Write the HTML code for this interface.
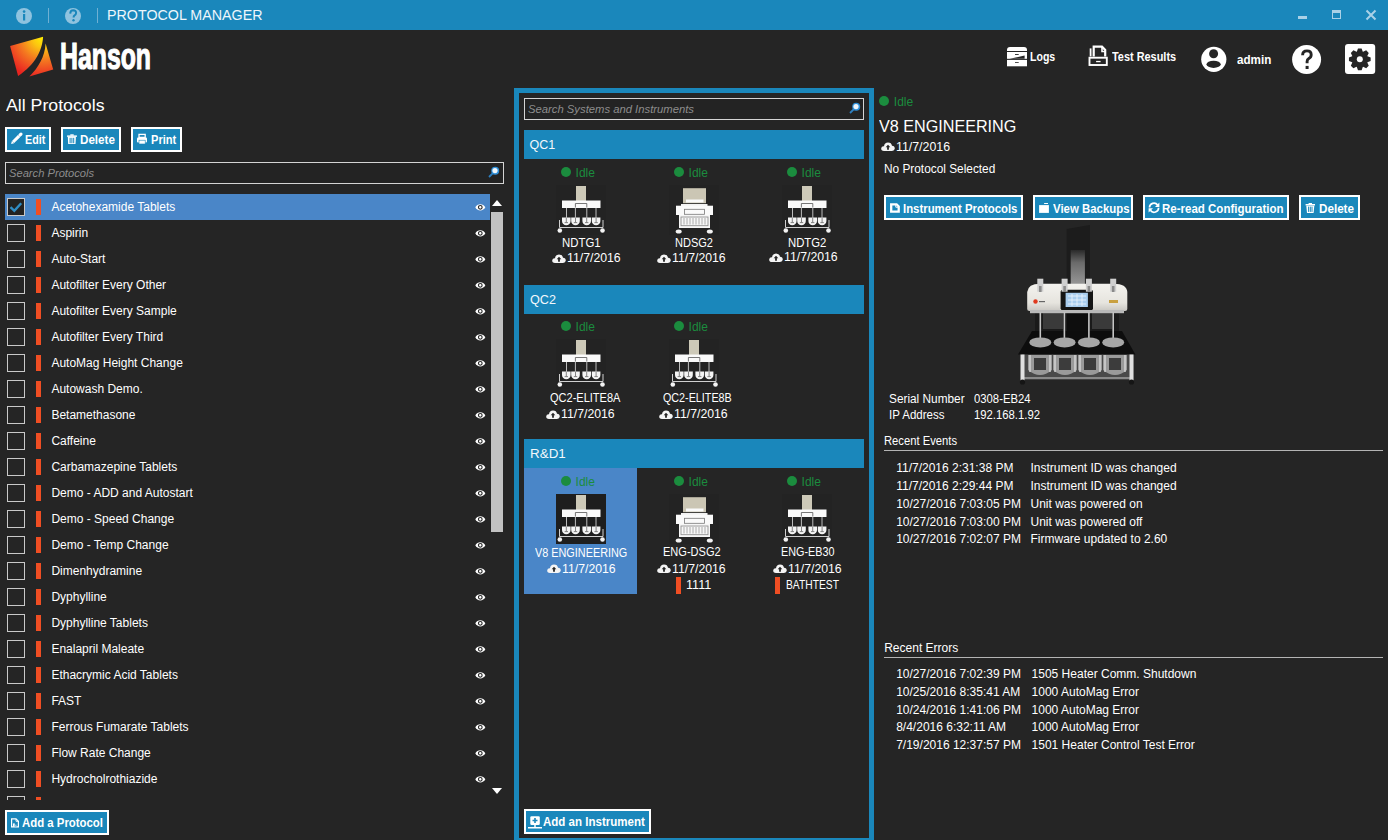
<!DOCTYPE html>
<html><head><meta charset="utf-8"><style>
html,body{margin:0;padding:0;}
body{width:1388px;height:840px;background:#252525;position:relative;overflow:hidden;font-family:"Liberation Sans",sans-serif;}
.t{position:absolute;white-space:pre;}
svg{overflow:visible}
</style></head><body>
<div style="position:absolute;left:0;top:0;width:1388px;height:30px;background:#1a87bb"></div><svg style="position:absolute;left:0;top:0" width="1388" height="30">
<circle cx="24" cy="16" r="8" fill="#8fc3df"/>
<rect x="23" y="14" width="2.2" height="6.5" fill="#1a87bb"/><circle cx="24.1" cy="11.6" r="1.3" fill="#1a87bb"/>
<line x1="48.5" y1="8" x2="48.5" y2="23" stroke="#6fb0d3" stroke-width="1"/>
<circle cx="73" cy="16" r="8" fill="#8fc3df"/>
<path d="M70.2 13.6 Q70.4 10.2 73.2 10.2 Q76.2 10.3 76.1 13 Q76 14.6 74.3 15.6 Q73.6 16.1 73.6 17.6" fill="none" stroke="#1a87bb" stroke-width="2"/>
<circle cx="73.5" cy="20.3" r="1.2" fill="#1a87bb"/>
<line x1="97.5" y1="8" x2="97.5" y2="23" stroke="#6fb0d3" stroke-width="1"/>
<rect x="1298" y="16" width="9" height="3" fill="#a9d1e7"/>
<rect x="1332.5" y="10.5" width="8" height="8" fill="none" stroke="#a9d1e7" stroke-width="1"/>
<rect x="1332" y="10" width="9" height="3" fill="#a9d1e7"/>
<path d="M1366.5 10.5 L1375.5 19.5 M1375.5 10.5 L1366.5 19.5" stroke="#a9d1e7" stroke-width="2"/>
</svg><svg style="position:absolute;left:0;top:0" width="160" height="90">
<defs><radialGradient id="lg" cx="43" cy="37" r="42" gradientUnits="userSpaceOnUse">
<stop offset="0" stop-color="#fff200"/><stop offset="0.25" stop-color="#fcc511"/><stop offset="0.55" stop-color="#f47a20"/><stop offset="0.85" stop-color="#ee3d23"/><stop offset="1" stop-color="#e8231f"/></radialGradient></defs>
<path d="M10.1 46 L43.1 36.8 C42.2 50 36 64 18.1 76 Z" fill="url(#lg)"/>
<path d="M45.6 43.6 L53.2 69.5 L29.4 76.6 C38.5 67.5 44.8 57 45.6 43.6 Z" fill="url(#lg)"/>
</svg><div style="position:absolute;left:5px;top:127px;width:42px;height:21px;border:2px solid #fff;background:#1a87bb"></div><svg style="position:absolute;left:0;top:120" width="60" height="40"><path d="M11.1 24 L11.9 20.9 L14.2 23.2 Z" fill="#fff"/><line x1="13.1" y1="22" x2="19" y2="16.1" stroke="#fff" stroke-width="3.1"/><line x1="19.9" y1="15.2" x2="21" y2="14.1" stroke="#fff" stroke-width="3.1" stroke-linecap="round"/></svg><div style="position:absolute;left:61px;top:127px;width:56px;height:21px;border:2px solid #fff;background:#1a87bb"></div><svg style="position:absolute;left:0;top:120px" width="200" height="40">
<rect x="67.1" y="15.4" width="9.8" height="1.5" fill="#fff"/><rect x="70.3" y="14.3" width="3.4" height="1.4" fill="#fff"/>
<path d="M67.8 17 H75.9 L75.5 24 H68.2 Z" fill="#fff"/>
<rect x="69.6" y="17.8" width="1" height="5.4" fill="#1a87bb"/><rect x="71.4" y="17.8" width="1" height="5.4" fill="#1a87bb"/><rect x="73.2" y="17.8" width="1" height="5.4" fill="#1a87bb"/>
</svg><div style="position:absolute;left:131px;top:127px;width:47px;height:21px;border:2px solid #fff;background:#1a87bb"></div><svg style="position:absolute;left:0;top:120px" width="200" height="40">
<rect x="139" y="14.4" width="6.2" height="3" fill="none" stroke="#fff" stroke-width="1.3"/>
<rect x="137" y="17.4" width="10" height="5" rx="1" fill="#fff"/>
<rect x="139" y="20.2" width="6.2" height="3.8" fill="#fff" stroke="#1a87bb" stroke-width="0.6"/>
</svg><div style="position:absolute;left:5px;top:162px;width:497px;height:20px;border:1px solid #d4d4d4;background:#232323"></div><svg style="position:absolute;left:484px;top:161.5px" width="20" height="20">
<line x1="5" y1="15" x2="9" y2="11" stroke="#2d7fc0" stroke-width="1.8"/>
<circle cx="11.2" cy="8.8" r="4" fill="#2e8fd8"/><circle cx="11" cy="8.6" r="2.6" fill="#f0f6fb"/></svg><div style="position:absolute;left:0;top:194px;width:510px;height:606px;overflow:hidden"><div style="position:absolute;left:5px;top:0;width:485px;height:26px;background:#4a86c8"></div><div style="position:absolute;left:7px;top:4px;width:16px;height:16px;border:1px solid #c9c9c9;background:#222"></div><svg style="position:absolute;left:7px;top:4px" width="18" height="18"><path d="M3.5 9.2 L7.3 12.8 L14.2 5.2" fill="none" stroke="#2f8cc4" stroke-width="2.4"/></svg><div style="position:absolute;left:36px;top:5px;width:5px;height:16px;background:#f04e23"></div><svg style="position:absolute;left:475.2px;top:9.5px" width="11" height="7" viewBox="0 0 11 7"><path d="M0.3 3.3 C2.2 -0.9 8.4 -0.9 10.3 3.3 C8.4 7.5 2.2 7.5 0.3 3.3 Z" fill="#fff"/><circle cx="5.3" cy="3.3" r="1.8" fill="none" stroke="#2a2a2a" stroke-width="1.2"/><circle cx="5.3" cy="3.3" r="0.9" fill="#fff"/></svg><div style="position:absolute;left:7px;top:30px;width:16px;height:16px;border:1px solid #c9c9c9;background:transparent"></div><div style="position:absolute;left:36px;top:31px;width:5px;height:16px;background:#f04e23"></div><svg style="position:absolute;left:475.2px;top:35.5px" width="11" height="7" viewBox="0 0 11 7"><path d="M0.3 3.3 C2.2 -0.9 8.4 -0.9 10.3 3.3 C8.4 7.5 2.2 7.5 0.3 3.3 Z" fill="#fff"/><circle cx="5.3" cy="3.3" r="1.8" fill="none" stroke="#2a2a2a" stroke-width="1.2"/><circle cx="5.3" cy="3.3" r="0.9" fill="#fff"/></svg><div style="position:absolute;left:7px;top:56px;width:16px;height:16px;border:1px solid #c9c9c9;background:transparent"></div><div style="position:absolute;left:36px;top:57px;width:5px;height:16px;background:#f04e23"></div><svg style="position:absolute;left:475.2px;top:61.5px" width="11" height="7" viewBox="0 0 11 7"><path d="M0.3 3.3 C2.2 -0.9 8.4 -0.9 10.3 3.3 C8.4 7.5 2.2 7.5 0.3 3.3 Z" fill="#fff"/><circle cx="5.3" cy="3.3" r="1.8" fill="none" stroke="#2a2a2a" stroke-width="1.2"/><circle cx="5.3" cy="3.3" r="0.9" fill="#fff"/></svg><div style="position:absolute;left:7px;top:82px;width:16px;height:16px;border:1px solid #c9c9c9;background:transparent"></div><div style="position:absolute;left:36px;top:83px;width:5px;height:16px;background:#f04e23"></div><svg style="position:absolute;left:475.2px;top:87.5px" width="11" height="7" viewBox="0 0 11 7"><path d="M0.3 3.3 C2.2 -0.9 8.4 -0.9 10.3 3.3 C8.4 7.5 2.2 7.5 0.3 3.3 Z" fill="#fff"/><circle cx="5.3" cy="3.3" r="1.8" fill="none" stroke="#2a2a2a" stroke-width="1.2"/><circle cx="5.3" cy="3.3" r="0.9" fill="#fff"/></svg><div style="position:absolute;left:7px;top:108px;width:16px;height:16px;border:1px solid #c9c9c9;background:transparent"></div><div style="position:absolute;left:36px;top:109px;width:5px;height:16px;background:#f04e23"></div><svg style="position:absolute;left:475.2px;top:113.5px" width="11" height="7" viewBox="0 0 11 7"><path d="M0.3 3.3 C2.2 -0.9 8.4 -0.9 10.3 3.3 C8.4 7.5 2.2 7.5 0.3 3.3 Z" fill="#fff"/><circle cx="5.3" cy="3.3" r="1.8" fill="none" stroke="#2a2a2a" stroke-width="1.2"/><circle cx="5.3" cy="3.3" r="0.9" fill="#fff"/></svg><div style="position:absolute;left:7px;top:134px;width:16px;height:16px;border:1px solid #c9c9c9;background:transparent"></div><div style="position:absolute;left:36px;top:135px;width:5px;height:16px;background:#f04e23"></div><svg style="position:absolute;left:475.2px;top:139.5px" width="11" height="7" viewBox="0 0 11 7"><path d="M0.3 3.3 C2.2 -0.9 8.4 -0.9 10.3 3.3 C8.4 7.5 2.2 7.5 0.3 3.3 Z" fill="#fff"/><circle cx="5.3" cy="3.3" r="1.8" fill="none" stroke="#2a2a2a" stroke-width="1.2"/><circle cx="5.3" cy="3.3" r="0.9" fill="#fff"/></svg><div style="position:absolute;left:7px;top:160px;width:16px;height:16px;border:1px solid #c9c9c9;background:transparent"></div><div style="position:absolute;left:36px;top:161px;width:5px;height:16px;background:#f04e23"></div><svg style="position:absolute;left:475.2px;top:165.5px" width="11" height="7" viewBox="0 0 11 7"><path d="M0.3 3.3 C2.2 -0.9 8.4 -0.9 10.3 3.3 C8.4 7.5 2.2 7.5 0.3 3.3 Z" fill="#fff"/><circle cx="5.3" cy="3.3" r="1.8" fill="none" stroke="#2a2a2a" stroke-width="1.2"/><circle cx="5.3" cy="3.3" r="0.9" fill="#fff"/></svg><div style="position:absolute;left:7px;top:186px;width:16px;height:16px;border:1px solid #c9c9c9;background:transparent"></div><div style="position:absolute;left:36px;top:187px;width:5px;height:16px;background:#f04e23"></div><svg style="position:absolute;left:475.2px;top:191.5px" width="11" height="7" viewBox="0 0 11 7"><path d="M0.3 3.3 C2.2 -0.9 8.4 -0.9 10.3 3.3 C8.4 7.5 2.2 7.5 0.3 3.3 Z" fill="#fff"/><circle cx="5.3" cy="3.3" r="1.8" fill="none" stroke="#2a2a2a" stroke-width="1.2"/><circle cx="5.3" cy="3.3" r="0.9" fill="#fff"/></svg><div style="position:absolute;left:7px;top:212px;width:16px;height:16px;border:1px solid #c9c9c9;background:transparent"></div><div style="position:absolute;left:36px;top:213px;width:5px;height:16px;background:#f04e23"></div><svg style="position:absolute;left:475.2px;top:217.5px" width="11" height="7" viewBox="0 0 11 7"><path d="M0.3 3.3 C2.2 -0.9 8.4 -0.9 10.3 3.3 C8.4 7.5 2.2 7.5 0.3 3.3 Z" fill="#fff"/><circle cx="5.3" cy="3.3" r="1.8" fill="none" stroke="#2a2a2a" stroke-width="1.2"/><circle cx="5.3" cy="3.3" r="0.9" fill="#fff"/></svg><div style="position:absolute;left:7px;top:238px;width:16px;height:16px;border:1px solid #c9c9c9;background:transparent"></div><div style="position:absolute;left:36px;top:239px;width:5px;height:16px;background:#f04e23"></div><svg style="position:absolute;left:475.2px;top:243.5px" width="11" height="7" viewBox="0 0 11 7"><path d="M0.3 3.3 C2.2 -0.9 8.4 -0.9 10.3 3.3 C8.4 7.5 2.2 7.5 0.3 3.3 Z" fill="#fff"/><circle cx="5.3" cy="3.3" r="1.8" fill="none" stroke="#2a2a2a" stroke-width="1.2"/><circle cx="5.3" cy="3.3" r="0.9" fill="#fff"/></svg><div style="position:absolute;left:7px;top:264px;width:16px;height:16px;border:1px solid #c9c9c9;background:transparent"></div><div style="position:absolute;left:36px;top:265px;width:5px;height:16px;background:#f04e23"></div><svg style="position:absolute;left:475.2px;top:269.5px" width="11" height="7" viewBox="0 0 11 7"><path d="M0.3 3.3 C2.2 -0.9 8.4 -0.9 10.3 3.3 C8.4 7.5 2.2 7.5 0.3 3.3 Z" fill="#fff"/><circle cx="5.3" cy="3.3" r="1.8" fill="none" stroke="#2a2a2a" stroke-width="1.2"/><circle cx="5.3" cy="3.3" r="0.9" fill="#fff"/></svg><div style="position:absolute;left:7px;top:290px;width:16px;height:16px;border:1px solid #c9c9c9;background:transparent"></div><div style="position:absolute;left:36px;top:291px;width:5px;height:16px;background:#f04e23"></div><svg style="position:absolute;left:475.2px;top:295.5px" width="11" height="7" viewBox="0 0 11 7"><path d="M0.3 3.3 C2.2 -0.9 8.4 -0.9 10.3 3.3 C8.4 7.5 2.2 7.5 0.3 3.3 Z" fill="#fff"/><circle cx="5.3" cy="3.3" r="1.8" fill="none" stroke="#2a2a2a" stroke-width="1.2"/><circle cx="5.3" cy="3.3" r="0.9" fill="#fff"/></svg><div style="position:absolute;left:7px;top:316px;width:16px;height:16px;border:1px solid #c9c9c9;background:transparent"></div><div style="position:absolute;left:36px;top:317px;width:5px;height:16px;background:#f04e23"></div><svg style="position:absolute;left:475.2px;top:321.5px" width="11" height="7" viewBox="0 0 11 7"><path d="M0.3 3.3 C2.2 -0.9 8.4 -0.9 10.3 3.3 C8.4 7.5 2.2 7.5 0.3 3.3 Z" fill="#fff"/><circle cx="5.3" cy="3.3" r="1.8" fill="none" stroke="#2a2a2a" stroke-width="1.2"/><circle cx="5.3" cy="3.3" r="0.9" fill="#fff"/></svg><div style="position:absolute;left:7px;top:342px;width:16px;height:16px;border:1px solid #c9c9c9;background:transparent"></div><div style="position:absolute;left:36px;top:343px;width:5px;height:16px;background:#f04e23"></div><svg style="position:absolute;left:475.2px;top:347.5px" width="11" height="7" viewBox="0 0 11 7"><path d="M0.3 3.3 C2.2 -0.9 8.4 -0.9 10.3 3.3 C8.4 7.5 2.2 7.5 0.3 3.3 Z" fill="#fff"/><circle cx="5.3" cy="3.3" r="1.8" fill="none" stroke="#2a2a2a" stroke-width="1.2"/><circle cx="5.3" cy="3.3" r="0.9" fill="#fff"/></svg><div style="position:absolute;left:7px;top:368px;width:16px;height:16px;border:1px solid #c9c9c9;background:transparent"></div><div style="position:absolute;left:36px;top:369px;width:5px;height:16px;background:#f04e23"></div><svg style="position:absolute;left:475.2px;top:373.5px" width="11" height="7" viewBox="0 0 11 7"><path d="M0.3 3.3 C2.2 -0.9 8.4 -0.9 10.3 3.3 C8.4 7.5 2.2 7.5 0.3 3.3 Z" fill="#fff"/><circle cx="5.3" cy="3.3" r="1.8" fill="none" stroke="#2a2a2a" stroke-width="1.2"/><circle cx="5.3" cy="3.3" r="0.9" fill="#fff"/></svg><div style="position:absolute;left:7px;top:394px;width:16px;height:16px;border:1px solid #c9c9c9;background:transparent"></div><div style="position:absolute;left:36px;top:395px;width:5px;height:16px;background:#f04e23"></div><svg style="position:absolute;left:475.2px;top:399.5px" width="11" height="7" viewBox="0 0 11 7"><path d="M0.3 3.3 C2.2 -0.9 8.4 -0.9 10.3 3.3 C8.4 7.5 2.2 7.5 0.3 3.3 Z" fill="#fff"/><circle cx="5.3" cy="3.3" r="1.8" fill="none" stroke="#2a2a2a" stroke-width="1.2"/><circle cx="5.3" cy="3.3" r="0.9" fill="#fff"/></svg><div style="position:absolute;left:7px;top:420px;width:16px;height:16px;border:1px solid #c9c9c9;background:transparent"></div><div style="position:absolute;left:36px;top:421px;width:5px;height:16px;background:#f04e23"></div><svg style="position:absolute;left:475.2px;top:425.5px" width="11" height="7" viewBox="0 0 11 7"><path d="M0.3 3.3 C2.2 -0.9 8.4 -0.9 10.3 3.3 C8.4 7.5 2.2 7.5 0.3 3.3 Z" fill="#fff"/><circle cx="5.3" cy="3.3" r="1.8" fill="none" stroke="#2a2a2a" stroke-width="1.2"/><circle cx="5.3" cy="3.3" r="0.9" fill="#fff"/></svg><div style="position:absolute;left:7px;top:446px;width:16px;height:16px;border:1px solid #c9c9c9;background:transparent"></div><div style="position:absolute;left:36px;top:447px;width:5px;height:16px;background:#f04e23"></div><svg style="position:absolute;left:475.2px;top:451.5px" width="11" height="7" viewBox="0 0 11 7"><path d="M0.3 3.3 C2.2 -0.9 8.4 -0.9 10.3 3.3 C8.4 7.5 2.2 7.5 0.3 3.3 Z" fill="#fff"/><circle cx="5.3" cy="3.3" r="1.8" fill="none" stroke="#2a2a2a" stroke-width="1.2"/><circle cx="5.3" cy="3.3" r="0.9" fill="#fff"/></svg><div style="position:absolute;left:7px;top:472px;width:16px;height:16px;border:1px solid #c9c9c9;background:transparent"></div><div style="position:absolute;left:36px;top:473px;width:5px;height:16px;background:#f04e23"></div><svg style="position:absolute;left:475.2px;top:477.5px" width="11" height="7" viewBox="0 0 11 7"><path d="M0.3 3.3 C2.2 -0.9 8.4 -0.9 10.3 3.3 C8.4 7.5 2.2 7.5 0.3 3.3 Z" fill="#fff"/><circle cx="5.3" cy="3.3" r="1.8" fill="none" stroke="#2a2a2a" stroke-width="1.2"/><circle cx="5.3" cy="3.3" r="0.9" fill="#fff"/></svg><div style="position:absolute;left:7px;top:498px;width:16px;height:16px;border:1px solid #c9c9c9;background:transparent"></div><div style="position:absolute;left:36px;top:499px;width:5px;height:16px;background:#f04e23"></div><svg style="position:absolute;left:475.2px;top:503.5px" width="11" height="7" viewBox="0 0 11 7"><path d="M0.3 3.3 C2.2 -0.9 8.4 -0.9 10.3 3.3 C8.4 7.5 2.2 7.5 0.3 3.3 Z" fill="#fff"/><circle cx="5.3" cy="3.3" r="1.8" fill="none" stroke="#2a2a2a" stroke-width="1.2"/><circle cx="5.3" cy="3.3" r="0.9" fill="#fff"/></svg><div style="position:absolute;left:7px;top:524px;width:16px;height:16px;border:1px solid #c9c9c9;background:transparent"></div><div style="position:absolute;left:36px;top:525px;width:5px;height:16px;background:#f04e23"></div><svg style="position:absolute;left:475.2px;top:529.5px" width="11" height="7" viewBox="0 0 11 7"><path d="M0.3 3.3 C2.2 -0.9 8.4 -0.9 10.3 3.3 C8.4 7.5 2.2 7.5 0.3 3.3 Z" fill="#fff"/><circle cx="5.3" cy="3.3" r="1.8" fill="none" stroke="#2a2a2a" stroke-width="1.2"/><circle cx="5.3" cy="3.3" r="0.9" fill="#fff"/></svg><div style="position:absolute;left:7px;top:550px;width:16px;height:16px;border:1px solid #c9c9c9;background:transparent"></div><div style="position:absolute;left:36px;top:551px;width:5px;height:16px;background:#f04e23"></div><svg style="position:absolute;left:475.2px;top:555.5px" width="11" height="7" viewBox="0 0 11 7"><path d="M0.3 3.3 C2.2 -0.9 8.4 -0.9 10.3 3.3 C8.4 7.5 2.2 7.5 0.3 3.3 Z" fill="#fff"/><circle cx="5.3" cy="3.3" r="1.8" fill="none" stroke="#2a2a2a" stroke-width="1.2"/><circle cx="5.3" cy="3.3" r="0.9" fill="#fff"/></svg><div style="position:absolute;left:7px;top:576px;width:16px;height:16px;border:1px solid #c9c9c9;background:transparent"></div><div style="position:absolute;left:36px;top:577px;width:5px;height:16px;background:#f04e23"></div><svg style="position:absolute;left:475.2px;top:581.5px" width="11" height="7" viewBox="0 0 11 7"><path d="M0.3 3.3 C2.2 -0.9 8.4 -0.9 10.3 3.3 C8.4 7.5 2.2 7.5 0.3 3.3 Z" fill="#fff"/><circle cx="5.3" cy="3.3" r="1.8" fill="none" stroke="#2a2a2a" stroke-width="1.2"/><circle cx="5.3" cy="3.3" r="0.9" fill="#fff"/></svg><div style="position:absolute;left:7px;top:602px;width:16px;height:16px;border:1px solid #c9c9c9;background:transparent"></div><div style="position:absolute;left:36px;top:603px;width:5px;height:16px;background:#f04e23"></div></div><svg style="position:absolute;left:488px;top:195px" width="18" height="605">
<path d="M4 11 L9 5 L14 11 Z" fill="#fff"/>
<rect x="3" y="17" width="12" height="320" fill="#c2c2c2"/>
<path d="M4 593 L9 599 L14 593 Z" fill="#fff"/>
</svg><div style="position:absolute;left:5px;top:810px;width:100px;height:21px;border:2px solid #fff;background:#1a87bb"></div><svg style="position:absolute;left:8px;top:815px" width="16" height="16"><path d="M3.6 3.9 H8 L10.4 6.3 V11.9 H3.6 Z" fill="none" stroke="#fff" stroke-width="1.2"/><path d="M8 3.9 V6.3 H10.4" fill="none" stroke="#fff" stroke-width="0.9"/><rect x="5" y="8.4" width="1.8" height="3.4" fill="#fff"/><rect x="6.6" y="9.6" width="2" height="2.2" fill="#8cc4e0"/></svg><div style="position:absolute;left:514px;top:88px;width:350px;height:752px;border:5px solid #1a87bb;border-bottom:none;background:#252525"></div><div style="position:absolute;left:514px;top:838px;width:360px;height:2px;background:#1a87bb"></div><div style="position:absolute;left:524px;top:98px;width:338px;height:20px;border:1px solid #d4d4d4;background:#232323"></div><svg style="position:absolute;left:845px;top:97.5px" width="20" height="20">
<line x1="5" y1="15" x2="9" y2="11" stroke="#2d7fc0" stroke-width="1.8"/>
<circle cx="11.2" cy="8.8" r="4" fill="#2e8fd8"/><circle cx="11" cy="8.6" r="2.6" fill="#f0f6fb"/></svg><div style="position:absolute;left:524px;top:130px;width:340px;height:29px;background:#1a87bb"></div><div style="position:absolute;left:524px;top:285px;width:340px;height:29px;background:#1a87bb"></div><div style="position:absolute;left:524px;top:439px;width:340px;height:29px;background:#1a87bb"></div><div style="position:absolute;left:524px;top:468px;width:113px;height:126px;background:#4a86c8"></div><div style="position:absolute;left:561px;top:167.2px;width:10px;height:10px;border-radius:50%;background:#1b8c3e"></div><div style="position:absolute;left:556px;top:185px;width:50px;height:50px;background:#232323"></div><svg style="position:absolute;left:556px;top:184px" width="50" height="50" viewBox="0 0 50 50">
<rect x="20" y="2" width="10" height="15" fill="#cdc9b8"/>
<rect x="6" y="16.5" width="38.5" height="7.5" fill="#fafafa"/>
<path d="M19.4 23.5 V19.5 H30.8 V23.5" fill="none" stroke="#555" stroke-width="0.8"/>
<path d="M10.5 24 V34 M19.4 24 V34 M30.8 24 V34 M40 24 V34" stroke="#bdbdbd" stroke-width="1"/>
<path d="M6 33.5 H14.6 V37 A4.3 4.3 0 0 1 6 37 Z M15.2 33.5 H23.8 V37 A4.3 4.3 0 0 1 15.2 37 Z M26.4 33.5 H35 V37 A4.3 4.3 0 0 1 26.4 37 Z M35.8 33.5 H44.4 V37 A4.3 4.3 0 0 1 35.8 37 Z" fill="#f4f4f4"/>
<path d="M10.3 33.5 V38.3 M8.6 38.6 H12 M19.5 33.5 V38.3 M17.8 38.6 H21.2 M30.7 33.5 V38.3 M29 38.6 H32.4 M40.1 33.5 V38.3 M38.4 38.6 H41.8" stroke="#666" stroke-width="0.8"/>
<path d="M3.5 36 V43.5 H47 V36" fill="none" stroke="#d0d0d0" stroke-width="1"/>
<circle cx="3.8" cy="46.5" r="2.3" fill="#f4f4f4"/><circle cx="46.5" cy="46.5" r="2.3" fill="#f4f4f4"/>
</svg><svg style="position:absolute;left:552.3px;top:254.09999999999997px" width="14" height="9" viewBox="0 0 14 9">
<path d="M3 9 Q0 9 0.2 6.3 Q0.5 4 3 4.2 Q3.5 0.5 7 0.5 Q10.5 0.6 11 3.8 Q13.8 4.1 13.8 6.6 Q13.6 9 11 9 Z" fill="#f4f4f4"/>
<path d="M7 2.8 L9.3 5.3 H7.9 V7.8 H6.1 V5.3 H4.7 Z" fill="#252525"/></svg><div style="position:absolute;left:674px;top:167.2px;width:10px;height:10px;border-radius:50%;background:#1b8c3e"></div><div style="position:absolute;left:669px;top:185px;width:50px;height:50px;background:#232323"></div><svg style="position:absolute;left:669px;top:184px" width="50" height="50" viewBox="0 0 50 50">
<rect x="14" y="4.2" width="23" height="15" fill="#cbc6b4"/>
<rect x="17" y="15.5" width="17.5" height="3" fill="#fafafa"/>
<rect x="12" y="20" width="26.5" height="3.2" fill="#f2f2f2"/>
<rect x="7" y="21.7" width="37" height="9.3" fill="#fafafa"/>
<rect x="15.4" y="25.3" width="20" height="5" fill="none" stroke="#777" stroke-width="0.8"/>
<rect x="10" y="31" width="31" height="13" fill="#f6f6f6"/>
<rect x="12" y="33" width="27" height="8.7" fill="none" stroke="#888" stroke-width="0.8"/>
<path d="M15 34 V40.5 M18 34 V40.5 M21 34 V40.5 M24 34 V40.5 M27 34 V40.5 M30 34 V40.5 M33 34 V40.5 M36 34 V40.5" stroke="#9a9a9a" stroke-width="0.8"/>
<ellipse cx="9.7" cy="47.4" rx="3" ry="2" fill="#f2f2f2"/><ellipse cx="40.8" cy="47.4" rx="3" ry="2" fill="#f2f2f2"/>
</svg><svg style="position:absolute;left:657.3px;top:254.09999999999997px" width="14" height="9" viewBox="0 0 14 9">
<path d="M3 9 Q0 9 0.2 6.3 Q0.5 4 3 4.2 Q3.5 0.5 7 0.5 Q10.5 0.6 11 3.8 Q13.8 4.1 13.8 6.6 Q13.6 9 11 9 Z" fill="#f4f4f4"/>
<path d="M7 2.8 L9.3 5.3 H7.9 V7.8 H6.1 V5.3 H4.7 Z" fill="#252525"/></svg><div style="position:absolute;left:787px;top:167.2px;width:10px;height:10px;border-radius:50%;background:#1b8c3e"></div><div style="position:absolute;left:782px;top:185px;width:50px;height:50px;background:#232323"></div><svg style="position:absolute;left:782px;top:184px" width="50" height="50" viewBox="0 0 50 50">
<rect x="20" y="2" width="10" height="15" fill="#cdc9b8"/>
<rect x="6" y="16.5" width="38.5" height="7.5" fill="#fafafa"/>
<path d="M19.4 23.5 V19.5 H30.8 V23.5" fill="none" stroke="#555" stroke-width="0.8"/>
<path d="M10.5 24 V34 M19.4 24 V34 M30.8 24 V34 M40 24 V34" stroke="#bdbdbd" stroke-width="1"/>
<path d="M6 33.5 H14.6 V37 A4.3 4.3 0 0 1 6 37 Z M15.2 33.5 H23.8 V37 A4.3 4.3 0 0 1 15.2 37 Z M26.4 33.5 H35 V37 A4.3 4.3 0 0 1 26.4 37 Z M35.8 33.5 H44.4 V37 A4.3 4.3 0 0 1 35.8 37 Z" fill="#f4f4f4"/>
<path d="M10.3 33.5 V38.3 M8.6 38.6 H12 M19.5 33.5 V38.3 M17.8 38.6 H21.2 M30.7 33.5 V38.3 M29 38.6 H32.4 M40.1 33.5 V38.3 M38.4 38.6 H41.8" stroke="#666" stroke-width="0.8"/>
<path d="M3.5 36 V43.5 H47 V36" fill="none" stroke="#d0d0d0" stroke-width="1"/>
<circle cx="3.8" cy="46.5" r="2.3" fill="#f4f4f4"/><circle cx="46.5" cy="46.5" r="2.3" fill="#f4f4f4"/>
</svg><svg style="position:absolute;left:769px;top:253.3px" width="14" height="9" viewBox="0 0 14 9">
<path d="M3 9 Q0 9 0.2 6.3 Q0.5 4 3 4.2 Q3.5 0.5 7 0.5 Q10.5 0.6 11 3.8 Q13.8 4.1 13.8 6.6 Q13.6 9 11 9 Z" fill="#f4f4f4"/>
<path d="M7 2.8 L9.3 5.3 H7.9 V7.8 H6.1 V5.3 H4.7 Z" fill="#252525"/></svg><div style="position:absolute;left:561px;top:321.2px;width:10px;height:10px;border-radius:50%;background:#1b8c3e"></div><div style="position:absolute;left:556px;top:339px;width:50px;height:50px;background:#232323"></div><svg style="position:absolute;left:556px;top:338px" width="50" height="50" viewBox="0 0 50 50">
<rect x="20" y="2" width="10" height="15" fill="#cdc9b8"/>
<rect x="6" y="16.5" width="38.5" height="7.5" fill="#fafafa"/>
<path d="M19.4 23.5 V19.5 H30.8 V23.5" fill="none" stroke="#555" stroke-width="0.8"/>
<path d="M10.5 24 V34 M19.4 24 V34 M30.8 24 V34 M40 24 V34" stroke="#bdbdbd" stroke-width="1"/>
<path d="M6 33.5 H14.6 V37 A4.3 4.3 0 0 1 6 37 Z M15.2 33.5 H23.8 V37 A4.3 4.3 0 0 1 15.2 37 Z M26.4 33.5 H35 V37 A4.3 4.3 0 0 1 26.4 37 Z M35.8 33.5 H44.4 V37 A4.3 4.3 0 0 1 35.8 37 Z" fill="#f4f4f4"/>
<path d="M10.3 33.5 V38.3 M8.6 38.6 H12 M19.5 33.5 V38.3 M17.8 38.6 H21.2 M30.7 33.5 V38.3 M29 38.6 H32.4 M40.1 33.5 V38.3 M38.4 38.6 H41.8" stroke="#666" stroke-width="0.8"/>
<path d="M3.5 36 V43.5 H47 V36" fill="none" stroke="#d0d0d0" stroke-width="1"/>
<circle cx="3.8" cy="46.5" r="2.3" fill="#f4f4f4"/><circle cx="46.5" cy="46.5" r="2.3" fill="#f4f4f4"/>
</svg><svg style="position:absolute;left:546px;top:409.8px" width="14" height="9" viewBox="0 0 14 9">
<path d="M3 9 Q0 9 0.2 6.3 Q0.5 4 3 4.2 Q3.5 0.5 7 0.5 Q10.5 0.6 11 3.8 Q13.8 4.1 13.8 6.6 Q13.6 9 11 9 Z" fill="#f4f4f4"/>
<path d="M7 2.8 L9.3 5.3 H7.9 V7.8 H6.1 V5.3 H4.7 Z" fill="#252525"/></svg><div style="position:absolute;left:674px;top:321.2px;width:10px;height:10px;border-radius:50%;background:#1b8c3e"></div><div style="position:absolute;left:669px;top:339px;width:50px;height:50px;background:#232323"></div><svg style="position:absolute;left:669px;top:338px" width="50" height="50" viewBox="0 0 50 50">
<rect x="20" y="2" width="10" height="15" fill="#cdc9b8"/>
<rect x="6" y="16.5" width="38.5" height="7.5" fill="#fafafa"/>
<path d="M19.4 23.5 V19.5 H30.8 V23.5" fill="none" stroke="#555" stroke-width="0.8"/>
<path d="M10.5 24 V34 M19.4 24 V34 M30.8 24 V34 M40 24 V34" stroke="#bdbdbd" stroke-width="1"/>
<path d="M6 33.5 H14.6 V37 A4.3 4.3 0 0 1 6 37 Z M15.2 33.5 H23.8 V37 A4.3 4.3 0 0 1 15.2 37 Z M26.4 33.5 H35 V37 A4.3 4.3 0 0 1 26.4 37 Z M35.8 33.5 H44.4 V37 A4.3 4.3 0 0 1 35.8 37 Z" fill="#f4f4f4"/>
<path d="M10.3 33.5 V38.3 M8.6 38.6 H12 M19.5 33.5 V38.3 M17.8 38.6 H21.2 M30.7 33.5 V38.3 M29 38.6 H32.4 M40.1 33.5 V38.3 M38.4 38.6 H41.8" stroke="#666" stroke-width="0.8"/>
<path d="M3.5 36 V43.5 H47 V36" fill="none" stroke="#d0d0d0" stroke-width="1"/>
<circle cx="3.8" cy="46.5" r="2.3" fill="#f4f4f4"/><circle cx="46.5" cy="46.5" r="2.3" fill="#f4f4f4"/>
</svg><svg style="position:absolute;left:659px;top:409.8px" width="14" height="9" viewBox="0 0 14 9">
<path d="M3 9 Q0 9 0.2 6.3 Q0.5 4 3 4.2 Q3.5 0.5 7 0.5 Q10.5 0.6 11 3.8 Q13.8 4.1 13.8 6.6 Q13.6 9 11 9 Z" fill="#f4f4f4"/>
<path d="M7 2.8 L9.3 5.3 H7.9 V7.8 H6.1 V5.3 H4.7 Z" fill="#252525"/></svg><div style="position:absolute;left:561px;top:476.2px;width:10px;height:10px;border-radius:50%;background:#1b8c3e"></div><div style="position:absolute;left:556px;top:494px;width:50px;height:50px;background:#1e1e1e"></div><svg style="position:absolute;left:556px;top:493px" width="50" height="50" viewBox="0 0 50 50">
<rect x="20" y="2" width="10" height="15" fill="#cdc9b8"/>
<rect x="6" y="16.5" width="38.5" height="7.5" fill="#fafafa"/>
<path d="M19.4 23.5 V19.5 H30.8 V23.5" fill="none" stroke="#555" stroke-width="0.8"/>
<path d="M10.5 24 V34 M19.4 24 V34 M30.8 24 V34 M40 24 V34" stroke="#bdbdbd" stroke-width="1"/>
<path d="M6 33.5 H14.6 V37 A4.3 4.3 0 0 1 6 37 Z M15.2 33.5 H23.8 V37 A4.3 4.3 0 0 1 15.2 37 Z M26.4 33.5 H35 V37 A4.3 4.3 0 0 1 26.4 37 Z M35.8 33.5 H44.4 V37 A4.3 4.3 0 0 1 35.8 37 Z" fill="#f4f4f4"/>
<path d="M10.3 33.5 V38.3 M8.6 38.6 H12 M19.5 33.5 V38.3 M17.8 38.6 H21.2 M30.7 33.5 V38.3 M29 38.6 H32.4 M40.1 33.5 V38.3 M38.4 38.6 H41.8" stroke="#666" stroke-width="0.8"/>
<path d="M3.5 36 V43.5 H47 V36" fill="none" stroke="#d0d0d0" stroke-width="1"/>
<circle cx="3.8" cy="46.5" r="2.3" fill="#f4f4f4"/><circle cx="46.5" cy="46.5" r="2.3" fill="#f4f4f4"/>
</svg><svg style="position:absolute;left:547.2px;top:564.4000000000001px" width="14" height="9" viewBox="0 0 14 9">
<path d="M3 9 Q0 9 0.2 6.3 Q0.5 4 3 4.2 Q3.5 0.5 7 0.5 Q10.5 0.6 11 3.8 Q13.8 4.1 13.8 6.6 Q13.6 9 11 9 Z" fill="#f4f4f4"/>
<path d="M7 2.8 L9.3 5.3 H7.9 V7.8 H6.1 V5.3 H4.7 Z" fill="#252525"/></svg><div style="position:absolute;left:674px;top:476.2px;width:10px;height:10px;border-radius:50%;background:#1b8c3e"></div><div style="position:absolute;left:669px;top:494px;width:50px;height:50px;background:#232323"></div><svg style="position:absolute;left:669px;top:493px" width="50" height="50" viewBox="0 0 50 50">
<rect x="14" y="4.2" width="23" height="15" fill="#cbc6b4"/>
<rect x="17" y="15.5" width="17.5" height="3" fill="#fafafa"/>
<rect x="12" y="20" width="26.5" height="3.2" fill="#f2f2f2"/>
<rect x="7" y="21.7" width="37" height="9.3" fill="#fafafa"/>
<rect x="15.4" y="25.3" width="20" height="5" fill="none" stroke="#777" stroke-width="0.8"/>
<rect x="10" y="31" width="31" height="13" fill="#f6f6f6"/>
<rect x="12" y="33" width="27" height="8.7" fill="none" stroke="#888" stroke-width="0.8"/>
<path d="M15 34 V40.5 M18 34 V40.5 M21 34 V40.5 M24 34 V40.5 M27 34 V40.5 M30 34 V40.5 M33 34 V40.5 M36 34 V40.5" stroke="#9a9a9a" stroke-width="0.8"/>
<ellipse cx="9.7" cy="47.4" rx="3" ry="2" fill="#f2f2f2"/><ellipse cx="40.8" cy="47.4" rx="3" ry="2" fill="#f2f2f2"/>
</svg><svg style="position:absolute;left:657px;top:564.4000000000001px" width="14" height="9" viewBox="0 0 14 9">
<path d="M3 9 Q0 9 0.2 6.3 Q0.5 4 3 4.2 Q3.5 0.5 7 0.5 Q10.5 0.6 11 3.8 Q13.8 4.1 13.8 6.6 Q13.6 9 11 9 Z" fill="#f4f4f4"/>
<path d="M7 2.8 L9.3 5.3 H7.9 V7.8 H6.1 V5.3 H4.7 Z" fill="#252525"/></svg><div style="position:absolute;left:676px;top:577px;width:5px;height:17px;background:#f04e23"></div><div style="position:absolute;left:787px;top:476.2px;width:10px;height:10px;border-radius:50%;background:#1b8c3e"></div><div style="position:absolute;left:782px;top:494px;width:50px;height:50px;background:#232323"></div><svg style="position:absolute;left:782px;top:493px" width="50" height="50" viewBox="0 0 50 50">
<rect x="20" y="2" width="10" height="15" fill="#cdc9b8"/>
<rect x="6" y="16.5" width="38.5" height="7.5" fill="#fafafa"/>
<path d="M19.4 23.5 V19.5 H30.8 V23.5" fill="none" stroke="#555" stroke-width="0.8"/>
<path d="M10.5 24 V34 M19.4 24 V34 M30.8 24 V34 M40 24 V34" stroke="#bdbdbd" stroke-width="1"/>
<path d="M6 33.5 H14.6 V37 A4.3 4.3 0 0 1 6 37 Z M15.2 33.5 H23.8 V37 A4.3 4.3 0 0 1 15.2 37 Z M26.4 33.5 H35 V37 A4.3 4.3 0 0 1 26.4 37 Z M35.8 33.5 H44.4 V37 A4.3 4.3 0 0 1 35.8 37 Z" fill="#f4f4f4"/>
<path d="M10.3 33.5 V38.3 M8.6 38.6 H12 M19.5 33.5 V38.3 M17.8 38.6 H21.2 M30.7 33.5 V38.3 M29 38.6 H32.4 M40.1 33.5 V38.3 M38.4 38.6 H41.8" stroke="#666" stroke-width="0.8"/>
<path d="M3.5 36 V43.5 H47 V36" fill="none" stroke="#d0d0d0" stroke-width="1"/>
<circle cx="3.8" cy="46.5" r="2.3" fill="#f4f4f4"/><circle cx="46.5" cy="46.5" r="2.3" fill="#f4f4f4"/>
</svg><svg style="position:absolute;left:773px;top:564.4000000000001px" width="14" height="9" viewBox="0 0 14 9">
<path d="M3 9 Q0 9 0.2 6.3 Q0.5 4 3 4.2 Q3.5 0.5 7 0.5 Q10.5 0.6 11 3.8 Q13.8 4.1 13.8 6.6 Q13.6 9 11 9 Z" fill="#f4f4f4"/>
<path d="M7 2.8 L9.3 5.3 H7.9 V7.8 H6.1 V5.3 H4.7 Z" fill="#252525"/></svg><div style="position:absolute;left:775px;top:577px;width:5px;height:17px;background:#f04e23"></div><div style="position:absolute;left:524px;top:809px;width:123px;height:21px;border:2px solid #fff;background:#1a87bb"></div><svg style="position:absolute;left:528px;top:812px" width="16" height="18"><rect x="2.3" y="4.2" width="9.5" height="8.8" rx="1.3" fill="#fff"/><path d="M7 6 V11 M4.5 8.5 H9.5" stroke="#1a87bb" stroke-width="1.6"/><path d="M7 13 V15.5 M0 15.7 H14" stroke="#fff" stroke-width="1.5"/></svg><div style="position:absolute;left:879px;top:96px;width:10px;height:10px;border-radius:50%;background:#1b8c3e"></div><svg style="position:absolute;left:881px;top:142px" width="14" height="9" viewBox="0 0 14 9">
<path d="M3 9 Q0 9 0.2 6.3 Q0.5 4 3 4.2 Q3.5 0.5 7 0.5 Q10.5 0.6 11 3.8 Q13.8 4.1 13.8 6.6 Q13.6 9 11 9 Z" fill="#f4f4f4"/>
<path d="M7 2.8 L9.3 5.3 H7.9 V7.8 H6.1 V5.3 H4.7 Z" fill="#252525"/></svg><div style="position:absolute;left:884px;top:195px;width:135px;height:21px;border:2px solid #fff;background:#1a87bb"></div><div style="position:absolute;left:1033px;top:195px;width:96px;height:21px;border:2px solid #fff;background:#1a87bb"></div><div style="position:absolute;left:1143px;top:195px;width:142px;height:21px;border:2px solid #fff;background:#1a87bb"></div><div style="position:absolute;left:1299px;top:195px;width:57px;height:21px;border:2px solid #fff;background:#1a87bb"></div><svg style="position:absolute;left:0;top:0" width="1388" height="230">
<path d="M891.2 204.3 H896.6 L898.7 206.4 V211.7 H891.2 Z" fill="none" stroke="#fff" stroke-width="2.3"/>
<path d="M895.8 204.5 V207.2 H898.5" fill="none" stroke="#fff" stroke-width="1"/>
<rect x="1039.1" y="205.1" width="9.8" height="7.8" fill="#fff"/><rect x="1044.1" y="203" width="3.9" height="1" fill="#fff"/>
<path d="M1149.5 207.6 A4.5 4.5 0 0 1 1157.6 204.9" fill="none" stroke="#fff" stroke-width="1.7"/>
<path d="M1158.6 207.7 A4.5 4.5 0 0 1 1150.4 210.3" fill="none" stroke="#fff" stroke-width="1.7"/>
<path d="M1159.4 202.6 V207 H1155 Z M1148.6 212.6 V208.2 H1153 Z" fill="#fff"/>
<rect x="1305.6" y="204" width="9.4" height="1.5" fill="#fff"/><rect x="1308.6" y="203" width="3.4" height="1.5" fill="#fff"/>
<path d="M1306.3 205.8 H1314.3 L1313.6 212.9 H1307 Z" fill="#fff"/>
<rect x="1308.1" y="206.6" width="1" height="5.3" fill="#1a87bb"/><rect x="1309.8" y="206.6" width="1" height="5.3" fill="#1a87bb"/><rect x="1311.5" y="206.6" width="1" height="5.3" fill="#1a87bb"/>
</svg><svg style="position:absolute;left:1010px;top:220px" width="140" height="170" viewBox="0 0 140 170">
<defs>
<linearGradient id="head" x1="0" y1="0" x2="0" y2="1"><stop offset="0" stop-color="#f4f3ef"/><stop offset="0.7" stop-color="#e6e4de"/><stop offset="1" stop-color="#c9c7c2"/></linearGradient>
<linearGradient id="colf" x1="0" y1="0" x2="0" y2="1"><stop offset="0" stop-color="#2a2a2a"/><stop offset="0.35" stop-color="#6a6a6a"/><stop offset="1" stop-color="#9a9a9a"/></linearGradient>
<linearGradient id="bath" x1="0" y1="0" x2="0" y2="1"><stop offset="0" stop-color="#4a4a4a"/><stop offset="0.5" stop-color="#7a7a7a"/><stop offset="1" stop-color="#5a5a5a"/></linearGradient>
</defs>
<path d="M56.6 9 L79.9 5 V66 H56.6 Z" fill="#1c1c1c"/>
<rect x="60.7" y="30" width="14.2" height="36" fill="url(#colf)"/>
<rect x="25" y="90" width="84" height="22" fill="#1a1a1a"/>
<rect x="33" y="93" width="20" height="16" fill="#3a3a3a"/><rect x="82" y="93" width="20" height="16" fill="#3a3a3a"/>
<rect x="57" y="93" width="21" height="19" fill="#0e0e0e"/>
<path d="M17.2 72 Q18 63.7 30 63.7 H104 Q116.5 63.7 117.3 72 V89 Q117.3 91 115 91 H19.5 Q17.2 91 17.2 89 Z" fill="url(#head)"/>
<rect x="50.6" y="69.8" width="32.4" height="20.5" rx="2" fill="#151515"/>
<rect x="55.6" y="72.8" width="22.3" height="14.2" fill="#a9cdee"/>
<path d="M58 76 H76 M58 80 H76 M58 84 H76 M62 74 V86 M67 74 V86 M72 74 V86" stroke="#e8f2fb" stroke-width="0.9"/>
<g fill="#cfcfcf"><rect x="27.3" y="58.7" width="6" height="13"/><rect x="51.6" y="58.7" width="6" height="13"/><rect x="75.9" y="58.7" width="6" height="13"/><rect x="100.2" y="58.7" width="6" height="13"/></g>
<g fill="#8a8a8a"><rect x="29" y="66" width="2.6" height="6"/><rect x="53.3" y="66" width="2.6" height="6"/><rect x="77.6" y="66" width="2.6" height="6"/><rect x="101.9" y="66" width="2.6" height="6"/></g>
<circle cx="25.5" cy="81.5" r="2.2" fill="#e03a1e"/><rect x="29" y="81" width="6" height="1.2" fill="#666"/>
<rect x="99" y="80" width="9" height="3" fill="#c9a040"/>
<rect x="20" y="90" width="94" height="3.2" fill="#b9b9b9"/>
<g fill="#555"><ellipse cx="30.3" cy="115.3" rx="10.5" ry="4"/><ellipse cx="54.6" cy="115.3" rx="10.5" ry="4"/><ellipse cx="78.9" cy="115.3" rx="10.5" ry="4"/><ellipse cx="103.2" cy="115.3" rx="10.5" ry="4"/></g>
<path d="M22 111 H112 L125.4 134.5 H8 Z" fill="#0d0d0d"/>
<path d="M30.3 92 V122 M54.4 92 V122 M78.9 92 V122 M103.2 92 V122" stroke="#c4c4c4" stroke-width="1.6"/>
<g fill="#a6a6a6"><ellipse cx="30.3" cy="122.4" rx="11" ry="5"/><ellipse cx="54.6" cy="122.4" rx="11" ry="5"/><ellipse cx="78.9" cy="122.4" rx="11" ry="5"/><ellipse cx="103.2" cy="122.4" rx="11" ry="5"/></g>
<rect x="12" y="134.5" width="111.4" height="25.3" fill="#4a4a4a"/>
<g fill="#9a9a9a"><path d="M18 135 H42 V150 Q30 160 18 150 Z"/><path d="M43 135 H67 V150 Q55 160 43 150 Z"/><path d="M68 135 H92 V150 Q80 160 68 150 Z"/><path d="M93 135 H117 V150 Q105 160 93 150 Z"/></g>
<g fill="#3c3c3c"><rect x="24" y="138" width="12" height="12"/><rect x="49" y="138" width="12" height="12"/><rect x="74" y="138" width="12" height="12"/><rect x="99" y="138" width="12" height="12"/></g>
<g stroke="#dcdcdc" stroke-width="1.3"><path d="M20 135 V152 M40 135 V152 M45 135 V152 M65 135 V152 M70 135 V152 M90 135 V152 M95 135 V152 M115 135 V152"/></g>
<path d="M14 158 H121" stroke="#8a8a8a" stroke-width="2"/>
<rect x="10.5" y="134.5" width="4" height="26" fill="#e0e0e0"/><rect x="119.5" y="134.5" width="4" height="26" fill="#e0e0e0"/>
<circle cx="12.5" cy="162" r="2.6" fill="#151515"/><circle cx="121.5" cy="162" r="2.6" fill="#151515"/>
</svg><div style="position:absolute;left:884px;top:450px;width:499px;height:1px;background:#b4b4b4"></div><div style="position:absolute;left:884px;top:657px;width:499px;height:1px;background:#b4b4b4"></div><svg style="position:absolute;left:1000px;top:40px" width="388" height="40">
<path d="M7 10 Q7 7 10 7 H24 Q27 7 27 10 V10.9 H7 Z" fill="#fff"/>
<rect x="7" y="12" width="20" height="6.8" fill="#fff"/>
<path d="M9.6 18.8 L24.6 15.6 V18.8 Z" fill="#252525"/>
<rect x="7" y="19.9" width="20" height="6.4" fill="#fff"/>
<rect x="15" y="14.1" width="3.7" height="0.9" fill="#252525"/><rect x="15" y="22" width="3.7" height="0.8" fill="#252525"/>
<rect x="89.5" y="17.7" width="17.3" height="7.3" fill="none" stroke="#fff" stroke-width="1.9"/>
<rect x="96.1" y="20.9" width="4.5" height="1.3" fill="#fff"/>
<rect x="89.7" y="8.4" width="1.8" height="8" fill="#fff"/>
<path d="M93.7 16.4 V6.7 H102 L105.2 10 V16.4" fill="none" stroke="#fff" stroke-width="2.2"/>
<path d="M102 7 V11.5 H105" fill="none" stroke="#fff" stroke-width="1.6"/>
<circle cx="213.8" cy="19.3" r="12.6" fill="#fff"/>
<circle cx="213.6" cy="13.8" r="4.5" fill="#252525"/>
<ellipse cx="213.6" cy="24.3" rx="7.1" ry="3.6" fill="#252525"/>
<circle cx="306.6" cy="19.4" r="14.5" fill="#fff"/>
<rect x="345" y="4" width="30.2" height="30" rx="3" fill="#fff"/>
</svg><svg style="position:absolute;left:1340px;top:40px" width="40" height="40">
<path d="M27.44 16.31 L30.65 17.49 L30.65 21.11 L27.44 22.29 L27.31 22.59 L28.75 25.70 L26.20 28.25 L23.09 26.81 L22.79 26.94 L21.61 30.15 L17.99 30.15 L16.81 26.94 L16.51 26.81 L13.40 28.25 L10.85 25.70 L12.29 22.59 L12.16 22.29 L8.95 21.11 L8.95 17.49 L12.16 16.31 L12.29 16.01 L10.85 12.90 L13.40 10.35 L16.51 11.79 L16.81 11.66 L17.99 8.45 L21.61 8.45 L22.79 11.66 L23.09 11.79 L26.20 10.35 L28.75 12.90 L27.31 16.01 Z" fill="#252525"/><circle cx="19.8" cy="19.3" r="3" fill="#fff"/></svg><svg style="position:absolute;left:0;top:0" width="1388" height="90">
<path d="M1302.6 55.2 Q1302.6 50.9 1307 50.9 Q1311.2 50.9 1311.2 54.8 Q1311.2 57.2 1308.8 58.6 Q1307.1 59.6 1307.1 61.6 V63.2" fill="none" stroke="#252525" stroke-width="2.9"/>
<rect x="1305.6" y="65.9" width="3" height="3.1" fill="#252525"/></svg>
<div class="t" style="left:106.50px;top:8.48px;font-size:14.5px;line-height:14.5px;font-weight:400;font-style:normal;color:#eef6fb;transform:scaleX(0.9847);transform-origin:0 0;">PROTOCOL MANAGER</div><div class="t" style="left:60.00px;top:38.48px;font-size:37px;line-height:37px;font-weight:700;font-style:normal;color:#fff;transform:scaleX(0.6707);transform-origin:0 0;-webkit-text-stroke:1.2px #fff;">Hanson</div><div class="t" style="left:5.50px;top:97.21px;font-size:17px;line-height:17px;font-weight:400;font-style:normal;color:#fff;transform:scaleX(1.0425);transform-origin:0 0;">All Protocols</div><div class="t" style="left:24.80px;top:133.84px;font-size:12px;line-height:12px;font-weight:700;font-style:normal;color:#fff;transform:scaleX(0.8910);transform-origin:0 0;">Edit</div><div class="t" style="left:80.40px;top:133.84px;font-size:12px;line-height:12px;font-weight:700;font-style:normal;color:#fff;transform:scaleX(0.9686);transform-origin:0 0;">Delete</div><div class="t" style="left:150.90px;top:133.94px;font-size:12px;line-height:12px;font-weight:700;font-style:normal;color:#fff;transform:scaleX(0.9216);transform-origin:0 0;">Print</div><div class="t" style="left:9.00px;top:167.87px;font-size:11.5px;line-height:11.5px;font-weight:400;font-style:italic;color:#8d8d8d;transform:scaleX(0.9706);transform-origin:0 0;">Search Protocols</div><div class="t" style="left:51.40px;top:201.44px;font-size:12px;line-height:12px;font-weight:400;font-style:normal;color:#fff;">Acetohexamide Tablets</div><div class="t" style="left:51.40px;top:227.44px;font-size:12px;line-height:12px;font-weight:400;font-style:normal;color:#fff;">Aspirin</div><div class="t" style="left:51.40px;top:253.44px;font-size:12px;line-height:12px;font-weight:400;font-style:normal;color:#fff;">Auto-Start</div><div class="t" style="left:51.40px;top:279.44px;font-size:12px;line-height:12px;font-weight:400;font-style:normal;color:#fff;">Autofilter Every Other</div><div class="t" style="left:51.40px;top:305.44px;font-size:12px;line-height:12px;font-weight:400;font-style:normal;color:#fff;">Autofilter Every Sample</div><div class="t" style="left:51.40px;top:331.44px;font-size:12px;line-height:12px;font-weight:400;font-style:normal;color:#fff;">Autofilter Every Third</div><div class="t" style="left:51.40px;top:357.44px;font-size:12px;line-height:12px;font-weight:400;font-style:normal;color:#fff;">AutoMag Height Change</div><div class="t" style="left:51.40px;top:383.44px;font-size:12px;line-height:12px;font-weight:400;font-style:normal;color:#fff;">Autowash Demo.</div><div class="t" style="left:51.40px;top:409.44px;font-size:12px;line-height:12px;font-weight:400;font-style:normal;color:#fff;">Betamethasone</div><div class="t" style="left:51.40px;top:435.44px;font-size:12px;line-height:12px;font-weight:400;font-style:normal;color:#fff;">Caffeine</div><div class="t" style="left:51.40px;top:461.44px;font-size:12px;line-height:12px;font-weight:400;font-style:normal;color:#fff;">Carbamazepine Tablets</div><div class="t" style="left:51.40px;top:487.44px;font-size:12px;line-height:12px;font-weight:400;font-style:normal;color:#fff;">Demo - ADD and Autostart</div><div class="t" style="left:51.40px;top:513.44px;font-size:12px;line-height:12px;font-weight:400;font-style:normal;color:#fff;">Demo - Speed Change</div><div class="t" style="left:51.40px;top:539.44px;font-size:12px;line-height:12px;font-weight:400;font-style:normal;color:#fff;">Demo - Temp Change</div><div class="t" style="left:51.40px;top:565.44px;font-size:12px;line-height:12px;font-weight:400;font-style:normal;color:#fff;">Dimenhydramine</div><div class="t" style="left:51.40px;top:591.44px;font-size:12px;line-height:12px;font-weight:400;font-style:normal;color:#fff;">Dyphylline</div><div class="t" style="left:51.40px;top:617.44px;font-size:12px;line-height:12px;font-weight:400;font-style:normal;color:#fff;">Dyphylline Tablets</div><div class="t" style="left:51.40px;top:643.44px;font-size:12px;line-height:12px;font-weight:400;font-style:normal;color:#fff;">Enalapril Maleate</div><div class="t" style="left:51.40px;top:669.44px;font-size:12px;line-height:12px;font-weight:400;font-style:normal;color:#fff;">Ethacrymic Acid Tablets</div><div class="t" style="left:51.40px;top:695.44px;font-size:12px;line-height:12px;font-weight:400;font-style:normal;color:#fff;">FAST</div><div class="t" style="left:51.40px;top:721.44px;font-size:12px;line-height:12px;font-weight:400;font-style:normal;color:#fff;">Ferrous Fumarate Tablets</div><div class="t" style="left:51.40px;top:747.44px;font-size:12px;line-height:12px;font-weight:400;font-style:normal;color:#fff;">Flow Rate Change</div><div class="t" style="left:51.40px;top:773.44px;font-size:12px;line-height:12px;font-weight:400;font-style:normal;color:#fff;">Hydrocholrothiazide</div><div class="t" style="left:22.40px;top:816.84px;font-size:12px;line-height:12px;font-weight:700;font-style:normal;color:#fff;transform:scaleX(0.9491);transform-origin:0 0;">Add a Protocol</div><div class="t" style="left:528.00px;top:104.02px;font-size:11.5px;line-height:11.5px;font-weight:400;font-style:italic;color:#8d8d8d;transform:scaleX(0.9800);transform-origin:0 0;">Search Systems and Instruments</div><div class="t" style="left:529.60px;top:139.02px;font-size:12.5px;line-height:12.5px;font-weight:400;font-style:normal;color:#f2f8fb;">QC1</div><div class="t" style="left:529.60px;top:294.02px;font-size:12.5px;line-height:12.5px;font-weight:400;font-style:normal;color:#f2f8fb;transform:scaleX(1.0116);transform-origin:0 0;">QC2</div><div class="t" style="left:529.60px;top:448.02px;font-size:12.5px;line-height:12.5px;font-weight:400;font-style:normal;color:#f2f8fb;transform:scaleX(1.0737);transform-origin:0 0;">R&amp;D1</div><div class="t" style="left:575.60px;top:166.64px;font-size:12px;line-height:12px;font-weight:400;font-style:normal;color:#1b8c3e;">Idle</div><div class="t" style="left:561.70px;top:236.64px;font-size:12px;line-height:12px;font-weight:400;font-style:normal;color:#fff;transform:scaleX(0.9491);transform-origin:0 0;">NDTG1</div><div class="t" style="left:566.80px;top:252.24px;font-size:12px;line-height:12px;font-weight:400;font-style:normal;color:#fff;transform:scaleX(1.0229);transform-origin:0 0;">11/7/2016</div><div class="t" style="left:688.60px;top:166.64px;font-size:12px;line-height:12px;font-weight:400;font-style:normal;color:#1b8c3e;">Idle</div><div class="t" style="left:675.10px;top:236.64px;font-size:12px;line-height:12px;font-weight:400;font-style:normal;color:#fff;transform:scaleX(0.9191);transform-origin:0 0;">NDSG2</div><div class="t" style="left:671.80px;top:252.24px;font-size:12px;line-height:12px;font-weight:400;font-style:normal;color:#fff;transform:scaleX(1.0229);transform-origin:0 0;">11/7/2016</div><div class="t" style="left:801.60px;top:166.64px;font-size:12px;line-height:12px;font-weight:400;font-style:normal;color:#1b8c3e;">Idle</div><div class="t" style="left:787.50px;top:236.64px;font-size:12px;line-height:12px;font-weight:400;font-style:normal;color:#fff;transform:scaleX(0.9441);transform-origin:0 0;">NDTG2</div><div class="t" style="left:783.50px;top:251.44px;font-size:12px;line-height:12px;font-weight:400;font-style:normal;color:#fff;transform:scaleX(1.0229);transform-origin:0 0;">11/7/2016</div><div class="t" style="left:575.60px;top:320.64px;font-size:12px;line-height:12px;font-weight:400;font-style:normal;color:#1b8c3e;">Idle</div><div class="t" style="left:549.90px;top:391.74px;font-size:12px;line-height:12px;font-weight:400;font-style:normal;color:#fff;transform:scaleX(0.9178);transform-origin:0 0;">QC2-ELITE8A</div><div class="t" style="left:560.50px;top:407.94px;font-size:12px;line-height:12px;font-weight:400;font-style:normal;color:#fff;transform:scaleX(1.0229);transform-origin:0 0;">11/7/2016</div><div class="t" style="left:688.60px;top:320.64px;font-size:12px;line-height:12px;font-weight:400;font-style:normal;color:#1b8c3e;">Idle</div><div class="t" style="left:662.60px;top:391.74px;font-size:12px;line-height:12px;font-weight:400;font-style:normal;color:#fff;transform:scaleX(0.8957);transform-origin:0 0;">QC2-ELITE8B</div><div class="t" style="left:673.50px;top:407.94px;font-size:12px;line-height:12px;font-weight:400;font-style:normal;color:#fff;transform:scaleX(1.0229);transform-origin:0 0;">11/7/2016</div><div class="t" style="left:575.60px;top:475.64px;font-size:12px;line-height:12px;font-weight:400;font-style:normal;color:#1b8c3e;">Idle</div><div class="t" style="left:534.70px;top:546.84px;font-size:12px;line-height:12px;font-weight:400;font-style:normal;color:#fff;transform:scaleX(0.9046);transform-origin:0 0;">V8 ENGINEERING</div><div class="t" style="left:561.70px;top:562.54px;font-size:12px;line-height:12px;font-weight:400;font-style:normal;color:#fff;transform:scaleX(1.0229);transform-origin:0 0;">11/7/2016</div><div class="t" style="left:688.60px;top:475.64px;font-size:12px;line-height:12px;font-weight:400;font-style:normal;color:#1b8c3e;">Idle</div><div class="t" style="left:662.70px;top:546.34px;font-size:12px;line-height:12px;font-weight:400;font-style:normal;color:#fff;transform:scaleX(0.9204);transform-origin:0 0;">ENG-DSG2</div><div class="t" style="left:671.50px;top:562.54px;font-size:12px;line-height:12px;font-weight:400;font-style:normal;color:#fff;transform:scaleX(1.0229);transform-origin:0 0;">11/7/2016</div><div class="t" style="left:686.40px;top:579.44px;font-size:12px;line-height:12px;font-weight:400;font-style:normal;color:#fff;transform:scaleX(1.0486);transform-origin:0 0;">1111</div><div class="t" style="left:801.60px;top:475.64px;font-size:12px;line-height:12px;font-weight:400;font-style:normal;color:#1b8c3e;">Idle</div><div class="t" style="left:780.80px;top:546.34px;font-size:12px;line-height:12px;font-weight:400;font-style:normal;color:#fff;transform:scaleX(0.8996);transform-origin:0 0;">ENG-EB30</div><div class="t" style="left:787.50px;top:562.54px;font-size:12px;line-height:12px;font-weight:400;font-style:normal;color:#fff;transform:scaleX(1.0229);transform-origin:0 0;">11/7/2016</div><div class="t" style="left:785.80px;top:579.44px;font-size:12px;line-height:12px;font-weight:400;font-style:normal;color:#fff;transform:scaleX(0.8579);transform-origin:0 0;">BATHTEST</div><div class="t" style="left:543.30px;top:815.84px;font-size:12px;line-height:12px;font-weight:700;font-style:normal;color:#fff;transform:scaleX(0.9602);transform-origin:0 0;">Add an Instrument</div><div class="t" style="left:893.80px;top:95.54px;font-size:12px;line-height:12px;font-weight:400;font-style:normal;color:#1b8c3e;">Idle</div><div class="t" style="left:879.30px;top:118.31px;font-size:17px;line-height:17px;font-weight:400;font-style:normal;color:#fff;transform:scaleX(0.9499);transform-origin:0 0;">V8 ENGINEERING</div><div class="t" style="left:896.40px;top:140.54px;font-size:12px;line-height:12px;font-weight:400;font-style:normal;color:#fff;transform:scaleX(1.0286);transform-origin:0 0;">11/7/2016</div><div class="t" style="left:884.40px;top:162.84px;font-size:12px;line-height:12px;font-weight:400;font-style:normal;color:#fff;transform:scaleX(0.9873);transform-origin:0 0;">No Protocol Selected</div><div class="t" style="left:903.00px;top:202.84px;font-size:12px;line-height:12px;font-weight:700;font-style:normal;color:#fff;transform:scaleX(0.9479);transform-origin:0 0;">Instrument Protocols</div><div class="t" style="left:1052.50px;top:202.84px;font-size:12px;line-height:12px;font-weight:700;font-style:normal;color:#fff;transform:scaleX(0.9505);transform-origin:0 0;">View Backups</div><div class="t" style="left:1162.00px;top:202.84px;font-size:12px;line-height:12px;font-weight:700;font-style:normal;color:#fff;transform:scaleX(0.9592);transform-origin:0 0;">Re-read Configuration</div><div class="t" style="left:1318.50px;top:202.84px;font-size:12px;line-height:12px;font-weight:700;font-style:normal;color:#fff;transform:scaleX(0.9714);transform-origin:0 0;">Delete</div><div class="t" style="left:889.00px;top:392.54px;font-size:12px;line-height:12px;font-weight:400;font-style:normal;color:#fff;transform:scaleX(0.9856);transform-origin:0 0;">Serial Number</div><div class="t" style="left:974.40px;top:392.54px;font-size:12px;line-height:12px;font-weight:400;font-style:normal;color:#fff;transform:scaleX(0.9426);transform-origin:0 0;">0308-EB24</div><div class="t" style="left:889.00px;top:408.74px;font-size:12px;line-height:12px;font-weight:400;font-style:normal;color:#fff;transform:scaleX(0.9597);transform-origin:0 0;">IP Address</div><div class="t" style="left:974.40px;top:408.74px;font-size:12px;line-height:12px;font-weight:400;font-style:normal;color:#fff;transform:scaleX(0.9418);transform-origin:0 0;">192.168.1.92</div><div class="t" style="left:884.40px;top:434.64px;font-size:12px;line-height:12px;font-weight:400;font-style:normal;color:#fff;transform:scaleX(0.9353);transform-origin:0 0;">Recent Events</div><div class="t" style="left:896.20px;top:461.74px;font-size:12px;line-height:12px;font-weight:400;font-style:normal;color:#fff;">11/7/2016 2:31:38 PM</div><div class="t" style="left:1030.50px;top:461.74px;font-size:12px;line-height:12px;font-weight:400;font-style:normal;color:#fff;">Instrument ID was changed</div><div class="t" style="left:896.20px;top:479.67px;font-size:12px;line-height:12px;font-weight:400;font-style:normal;color:#fff;">11/7/2016 2:29:44 PM</div><div class="t" style="left:1030.50px;top:479.67px;font-size:12px;line-height:12px;font-weight:400;font-style:normal;color:#fff;">Instrument ID was changed</div><div class="t" style="left:896.20px;top:497.60px;font-size:12px;line-height:12px;font-weight:400;font-style:normal;color:#fff;">10/27/2016 7:03:05 PM</div><div class="t" style="left:1030.50px;top:497.60px;font-size:12px;line-height:12px;font-weight:400;font-style:normal;color:#fff;">Unit was powered on</div><div class="t" style="left:896.20px;top:515.53px;font-size:12px;line-height:12px;font-weight:400;font-style:normal;color:#fff;">10/27/2016 7:03:00 PM</div><div class="t" style="left:1030.50px;top:515.53px;font-size:12px;line-height:12px;font-weight:400;font-style:normal;color:#fff;">Unit was powered off</div><div class="t" style="left:896.20px;top:533.46px;font-size:12px;line-height:12px;font-weight:400;font-style:normal;color:#fff;">10/27/2016 7:02:07 PM</div><div class="t" style="left:1030.50px;top:533.46px;font-size:12px;line-height:12px;font-weight:400;font-style:normal;color:#fff;">Firmware updated to 2.60</div><div class="t" style="left:884.20px;top:641.84px;font-size:12px;line-height:12px;font-weight:400;font-style:normal;color:#fff;">Recent Errors</div><div class="t" style="left:896.20px;top:667.64px;font-size:12px;line-height:12px;font-weight:400;font-style:normal;color:#fff;">10/27/2016 7:02:39 PM</div><div class="t" style="left:1031.60px;top:667.64px;font-size:12px;line-height:12px;font-weight:400;font-style:normal;color:#fff;">1505 Heater Comm. Shutdown</div><div class="t" style="left:896.20px;top:685.57px;font-size:12px;line-height:12px;font-weight:400;font-style:normal;color:#fff;">10/25/2016 8:35:41 AM</div><div class="t" style="left:1031.60px;top:685.57px;font-size:12px;line-height:12px;font-weight:400;font-style:normal;color:#fff;">1000 AutoMag Error</div><div class="t" style="left:896.20px;top:703.50px;font-size:12px;line-height:12px;font-weight:400;font-style:normal;color:#fff;">10/24/2016 1:41:06 PM</div><div class="t" style="left:1031.60px;top:703.50px;font-size:12px;line-height:12px;font-weight:400;font-style:normal;color:#fff;">1000 AutoMag Error</div><div class="t" style="left:896.20px;top:721.43px;font-size:12px;line-height:12px;font-weight:400;font-style:normal;color:#fff;">8/4/2016 6:32:11 AM</div><div class="t" style="left:1031.60px;top:721.43px;font-size:12px;line-height:12px;font-weight:400;font-style:normal;color:#fff;">1000 AutoMag Error</div><div class="t" style="left:896.20px;top:739.36px;font-size:12px;line-height:12px;font-weight:400;font-style:normal;color:#fff;">7/19/2016 12:37:57 PM</div><div class="t" style="left:1031.60px;top:739.36px;font-size:12px;line-height:12px;font-weight:400;font-style:normal;color:#fff;">1501 Heater Control Test Error</div><div class="t" style="left:1030.00px;top:51.42px;font-size:12.5px;line-height:12.5px;font-weight:700;font-style:normal;color:#fff;transform:scaleX(0.8440);transform-origin:0 0;">Logs</div><div class="t" style="left:1111.70px;top:51.42px;font-size:12.5px;line-height:12.5px;font-weight:700;font-style:normal;color:#fff;transform:scaleX(0.8732);transform-origin:0 0;">Test Results</div><div class="t" style="left:1237.00px;top:53.62px;font-size:12.5px;line-height:12.5px;font-weight:700;font-style:normal;color:#fff;transform:scaleX(0.9317);transform-origin:0 0;">admin</div>
</body></html>
